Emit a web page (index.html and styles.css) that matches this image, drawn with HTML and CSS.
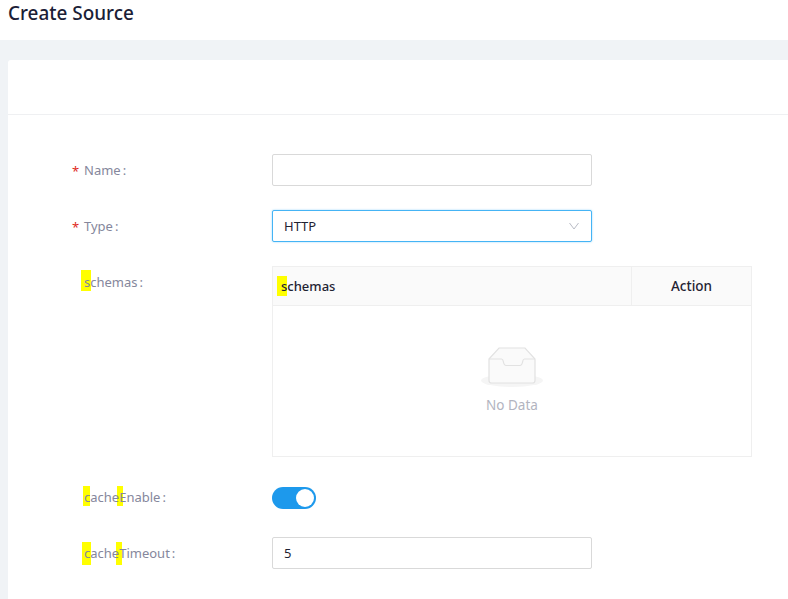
FILE: index.html
```html
<!DOCTYPE html>
<html lang="en">
<head>
  <meta charset="UTF-8">
  <title>Create Source</title>
  <link rel="stylesheet" href="styles.css">
</head>
<body>

  <div class="page-header">Create Source</div>

  <div class="content">
    <div class="card">
      <div class="card-head"></div>
      <form class="form">

        <div class="row row-name">
          <label class="label required">Name<i>:</i></label>
          <div class="input"></div>
        </div>

        <div class="row row-type">
          <label class="label required">Type<i>:</i></label>
          <div class="input select">
            HTTP
            <svg class="arrow" width="12" height="8" viewBox="0 0 12 8"><path d="M1.500 1l4.500 6 4.500-6" fill="none" stroke="#b9bcc6" stroke-width="1"/></svg>
          </div>
        </div>

        <div class="row row-schemas">
          <label class="label"><mark class="hl-label">s</mark>chemas<i>:</i></label>
          <div class="table">
            <div class="thead">
              <div class="th"><mark class="hl-th">s</mark>chemas</div>
              <div class="th th-action">Action</div>
            </div>
            <div class="empty">
              <svg width="62" height="42" viewBox="0 0 62 42">
                <ellipse cx="31" cy="33.500" rx="31" ry="6.500" fill="#f5f5f5"/>
                <path d="M8 12L18 1h26l10 11v21.500a2.500 2.500 0 0 1-2.500 2.500h-41A2.500 2.500 0 0 1 8 33.500z" fill="#fafafa" stroke="#e2e2e2" stroke-width="1.200"/>
                <path d="M8 12h12.500c1.200 0 1.500 .8 1.700 2 .3 2 1 4.500 3 4.500h13.600c2 0 2.700-2.500 3-4.500 .2-1.200 .5-2 1.700-2H54" fill="none" stroke="#e2e2e2" stroke-width="1.200"/>
              </svg>
              <div class="empty-text">No Data</div>
            </div>
          </div>
        </div>

        <div class="row row-enable">
          <label class="label"><mark class="hl-enable">c</mark><span class="over">ache</span><mark class="hl-enable-mid">E</mark>nable<i>:</i></label>
          <div class="switch"><span class="knob"></span></div>
        </div>

        <div class="row row-timeout">
          <label class="label"><mark class="hl-timeout">c</mark><span class="over">ache</span><mark class="hl-timeout-mid">T</mark>imeout<i>:</i></label>
          <div class="input">5</div>
        </div>

      </form>
    </div>
  </div>

</body>
</html>
```

FILE: styles.css
```css
html, body {
  height: 599px;
  overflow: hidden;
}

body {
  margin: 0;
  font-family: "Noto Sans", "Open Sans", sans-serif;
  font-size: 13px;
  color: #1f2333;
  background: #f0f3f6;
}

.page-header {
  height: 40px;
  padding: 0 8px;
  background: #fff;
  font-size: 18.900px;
  font-weight: 500;
  line-height: 26px;
  color: #1a2036;
}

.content {
  padding: 20px 0 0 8px;
}

.card {
  background: #fff;
  border-radius: 3px 0 0 0;
  height: 539px;
}

.card-head {
  height: 54px;
  border-bottom: 1px solid #eff0f2;
}

.form {
  padding: 39px 36px 0 64px;
}

.row {
  display: flex;
  align-items: flex-start;
}

.row-type { margin-top: 24px; }
.row-schemas { margin-top: 24px; }
.row-enable { margin-top: 30px; }
.row-timeout { margin-top: 28px; }

.label {
  width: 200px;
  flex: none;
  padding-left: 12px;
  box-sizing: border-box;
  line-height: 32px;
  color: #85879c;
  position: relative;
}

.label i {
  font-style: normal;
  margin-left: 2px;
}

.required::before {
  content: "*";
  position: absolute;
  left: 0;
  top: 1px;
  color: #e02a1c;
}

mark {
  background: #ffff00;
  color: inherit;
}

/* keeps the letters above the highlight that follows them */
.over {
  position: relative;
}

.hl-label {
  padding: 3px 1px 0 3px;
  margin: 0 -1px 0 -3px;
}

.hl-th {
  padding: 1px 0 1px 4px;
  margin-left: -4px;
}

.hl-enable {
  padding: 2px 0 0 1px;
  margin-left: -1px;
}

.hl-timeout {
  padding: 2px 1px 3px 2px;
  margin: 0 -1px 0 -2px;
}

.hl-enable-mid,
.hl-timeout-mid {
  background: linear-gradient(#ffff00, #ffff00) no-repeat;
  background-size: 6px 100%;
}

.hl-enable-mid {
  padding: 2px 0 0 2px;
  margin-left: -2px;
}

.hl-timeout-mid {
  padding: 2px 0 3px 3px;
  margin-left: -3px;
}

.input {
  width: 320px;
  height: 32px;
  box-sizing: border-box;
  padding: 0 11px;
  border: 1px solid #d9d9d9;
  border-radius: 2px;
  line-height: 30px;
  background: #fff;
}

.select {
  display: flex;
  justify-content: space-between;
  align-items: center;
  border-color: #45b4f5;
  box-shadow: 0 0 2px rgba(69, 180, 245, .6);
}

.table {
  width: 480px;
  height: 191px;
  box-sizing: border-box;
  border: 1px solid #efefef;
}

.thead {
  display: flex;
  height: 39px;
  background: #fafafa;
  border-bottom: 1px solid #efefef;
  box-sizing: border-box;
  font-weight: 500;
  line-height: 38px;
}

.th {
  flex: 1;
  padding-left: 8px;
}

.th-action {
  flex: none;
  width: 120px;
  padding: 0;
  text-align: center;
  font-size: 13.500px;
  border-left: 1px solid #efefef;
  box-sizing: border-box;
}

.empty {
  display: flex;
  flex-direction: column;
  align-items: center;
  padding-top: 41px;
}

.empty-text {
  margin-top: 6px;
  font-size: 13.500px;
  color: #b2b4c0;
  line-height: 20px;
}

.switch {
  width: 44px;
  height: 22px;
  padding: 2px;
  box-sizing: border-box;
  display: flex;
  justify-content: flex-end;
  background: #1d99ec;
  border-radius: 11px;
}

.knob {
  width: 18px;
  height: 18px;
  background: #fff;
  border-radius: 50%;
}

.row-enable .label {
  line-height: 20px;
}
```
